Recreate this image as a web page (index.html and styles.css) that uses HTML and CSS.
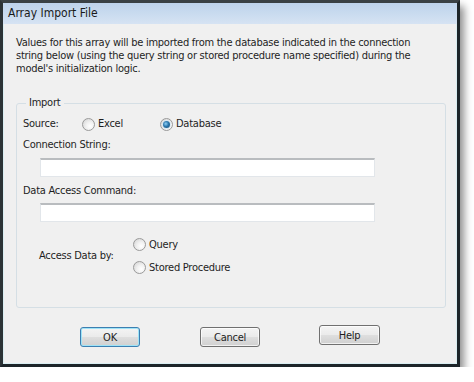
FILE: index.html
```html
<!DOCTYPE html>
<html lang="en">
<head>
    <meta charset="UTF-8">
    <title>Array Import File</title>
    <link rel="stylesheet" href="styles.css">
</head>
<body>
    <!-- Dialog window -->
    <div class="window">
        <div class="titlebar">Array Import File</div>

        <div class="content">
            <p class="intro">
                Values for this array will be imported from the database indicated in the connection<br>
                string below (using the query string or stored procedure name specified) during the<br>
                model's initialization logic.
            </p>

            <fieldset class="group">
                <legend>Import</legend>

                <div class="row source-row">
                    <span class="source-label">Source:</span>
                    <label class="option excel"><span class="radio"></span>Excel</label>
                    <label class="option"><span class="radio on"></span>Database</label>
                </div>

                <div class="row field-label">Connection String:</div>
                <div class="textbox"></div>

                <div class="row field-label second">Data Access Command:</div>
                <div class="textbox second"></div>

                <div class="access">
                    <span class="access-label">Access Data by:</span>
                    <div class="access-options">
                        <label class="option"><span class="radio"></span>Query</label>
                        <label class="option"><span class="radio"></span>Stored Procedure</label>
                    </div>
                </div>
            </fieldset>

            <div class="buttons">
                <button class="btn btn-default">OK</button>
                <button class="btn">Cancel</button>
                <button class="btn btn-help">Help</button>
            </div>
        </div>
    </div>
</body>
</html>
```

FILE: styles.css
```css
* {
    margin: 0;
    padding: 0;
    box-sizing: border-box;
}

body {
    background: #ffffff;
    font-family: "DejaVu Sans Condensed", "DejaVu Sans", sans-serif;
    font-stretch: condensed;
    font-size: 11px;
    letter-spacing: -0.25px;
    color: #1e1e1e;
}

/* Window frame */
.window {
    width: 460px;
    height: 367px;
    border: 3px solid #1d2529;
    border-top-color: #3a4145;
    border-left-color: #2c3336;
    background: #f0f0f0;
    box-shadow: 4px 6px 8px rgba(0, 0, 0, 0.45), inset 0 0 0 1px #d9eef2;
}

.titlebar {
    height: 21px;
    padding-left: 5px;
    line-height: 21px;
    font-size: 12px;
    letter-spacing: 0;
    color: #1a1a1a;
    background: linear-gradient(180deg, #bed3ec 0%, #c9dbef 50%, #d6e3f3 100%);
}

.content {
    padding: 0 0 0 13px;
}

.intro {
    margin-top: 12px;
    line-height: 13px;
    white-space: nowrap;
}

/* Group box */
.group {
    margin-top: 21px;
    width: 430px;
    border: 1px solid #d5dfe5;
    border-radius: 3px;
    padding: 6px 0 32px 6px;
}

.group legend {
    margin-left: 3px;
    padding: 0 4px 0 3px;
    line-height: 14px;
}

.row {
    height: 16px;
    line-height: 16px;
}

.source-row {
    display: flex;
    align-items: center;
}

.source-label {
    width: 59px;
}

.option {
    display: flex;
    align-items: center;
    gap: 3px;
    height: 16px;
}

.option.excel {
    width: 78px;
}

/* Radio buttons */
.radio {
    position: relative;
    width: 13px;
    height: 13px;
    border-radius: 50%;
    border: 1px solid #9a9a9a;
    background: radial-gradient(circle at 65% 65%, #ffffff 0%, #f1f1f1 40%, #cfcfcf 100%);
}

.radio.on::after {
    content: '';
    position: absolute;
    top: 2px;
    left: 2px;
    width: 7px;
    height: 7px;
    border-radius: 50%;
    background: radial-gradient(circle at 40% 40%, #8fd0f5 0%, #2a77ad 45%, #174a72 100%);
    box-shadow: 0 0 0 1px #d7e6f0;
}

.field-label {
    margin-top: 5px;
}

.field-label.second {
    margin-top: 6px;
}

.textbox {
    margin: 5px 0 0 17px;
    width: 335px;
    height: 19px;
    background: #ffffff;
    border: 1px solid #e2e6ea;
    border-top: 2px solid #b9bcbf;
}

.textbox.second {
    margin-top: 4px;
}

/* Access data block */
.access {
    display: flex;
    align-items: center;
    margin: 14px 0 0 16px;
}

.access-label {
    width: 94px;
}

.access-options {
    display: flex;
    flex-direction: column;
    gap: 7px;
}

/* Dialog buttons */
.buttons {
    display: flex;
    gap: 60px;
    margin-top: 19px;
    padding-left: 64px;
}

.btn {
    width: 60px;
    height: 20px;
    font-family: inherit;
    font-size: 11px;
    letter-spacing: inherit;
    color: #1e1e1e;
    border: 1px solid #707070;
    border-radius: 3px;
    background: linear-gradient(180deg, #f4f4f4 0%, #ebebeb 48%, #dedede 52%, #d0d0d0 100%);
    box-shadow: inset 0 0 0 1px rgba(255, 255, 255, 0.7);
}

.btn-default {
    border-color: #3c7fb1;
    box-shadow: inset 0 0 0 1px #9ee3f7;
}

.btn-help {
    margin-left: -1px;
    width: 61px;
    position: relative;
    top: -2px;
}
```
